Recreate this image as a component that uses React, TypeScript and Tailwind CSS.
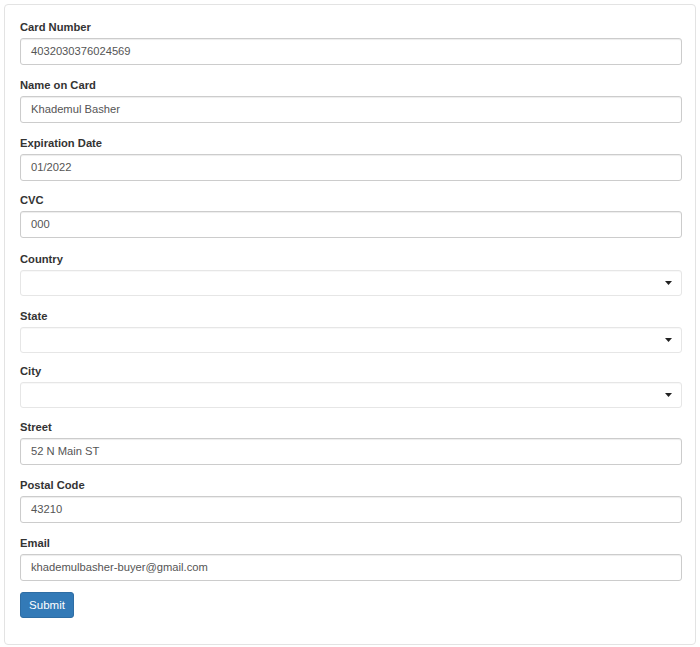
import React from "react";

const fields: { label: string; value?: string; select?: boolean; mb: string }[] = [
  { label: "Card Number", value: "4032030376024569", mb: "mb-[13px]" },
  { label: "Name on Card", value: "Khademul Basher", mb: "mb-[13px]" },
  { label: "Expiration Date", value: "01/2022", mb: "mb-[12px]" },
  { label: "CVC", value: "000", mb: "mb-[14px]" },
  { label: "Country", select: true, mb: "mb-[13px]" },
  { label: "State", select: true, mb: "mb-[11px]" },
  { label: "City", select: true, mb: "mb-[12px]" },
  { label: "Street", value: "52 N Main ST", mb: "mb-[13px]" },
  { label: "Postal Code", value: "43210", mb: "mb-[13px]" },
  { label: "Email", value: "khademulbasher-buyer@gmail.com", mb: "mb-[11px]" },
];

export default function App() {
  return (
    <div className="bg-white w-[700px] h-[647px] pt-[4px] pl-[4px]" style={{ fontFamily: '"Liberation Sans", Arial, sans-serif' }}>
      <div className="w-[692px] h-[641px] border border-[#e3e3e3] rounded-[4px] pl-[15px] pr-[13px] pt-[15px]">
        {fields.map((f) => (
          <div key={f.label} className={f.mb}>
            <div className="text-[11.2px] leading-[15px] font-bold text-[#333] mb-[3px]">{f.label}</div>
            <div
              className={
                (f.select
                  ? "h-[26px] border-[#e6e6e6] shadow-[inset_0_1px_1px_rgba(0,0,0,0.03)] "
                  : "h-[27px] border-[#ccc] shadow-[inset_0_1px_1px_rgba(0,0,0,0.075)] ") +
                "w-[662px] border rounded-[3px] flex items-center justify-between pl-[10px] pr-[9px] text-[11.2px] text-[#555]"
              }
            >
              <span>{f.value ?? ""}</span>
              {f.select && (
                <svg width="7" height="4" viewBox="0 0 7 4">
                  <path d="M0 0 L7 0 L3.5 4 Z" fill="#222" />
                </svg>
              )}
            </div>
          </div>
        ))}
        <button className="block h-[26px] w-[54px] bg-[#337ab7] border border-[#2e6da4] rounded-[3px] text-white text-[11.5px] leading-none pt-[1px]">
          Submit
        </button>
      </div>
    </div>
  );
}
